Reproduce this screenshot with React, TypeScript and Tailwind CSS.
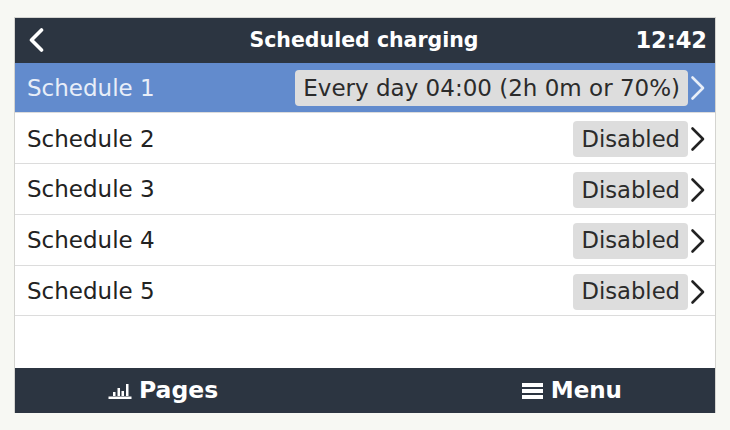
const ROWS = [
  { name: 'Schedule 1', value: 'Every day 04:00 (2h 0m or 70%)', active: true },
  { name: 'Schedule 2', value: 'Disabled' },
  { name: 'Schedule 3', value: 'Disabled' },
  { name: 'Schedule 4', value: 'Disabled' },
  { name: 'Schedule 5', value: 'Disabled' },
]

function Chevron({ left, className }: { left?: boolean; className?: string }) {
  return (
    <svg width="16" height="26" viewBox="0 0 16 26" fill="none" className={className}>
      <path
        d={left ? 'M13.5 3 L3.5 13 L13.5 23' : 'M2.5 2.5 L13 13 L2.5 23.5'}
        stroke="currentColor"
        strokeWidth={left ? 3.6 : 2.6}
        strokeLinecap="round"
        strokeLinejoin="round"
      />
    </svg>
  )
}

function Row({ name, value, active }: { name: string; value: string; active?: boolean }) {
  return (
    <div
      className={`flex h-[50.8px] items-center border-b border-[#dcdcdc] pt-[2px] pl-[12px] pr-[9px] ${
        active ? 'bg-[#628bcd] text-[#e8eef8]' : 'bg-white text-[#222]'
      }`}
    >
      <span className="flex-1 text-[23px] leading-none">{name}</span>
      <span
        className={`mr-[2px] flex h-[36px] items-center rounded-[4px] bg-[#dddddd] px-2 leading-none text-[#2b2b2b] ${
          active ? 'text-[23px]' : 'text-[22.7px]'
        }`}
      >
        {value}
      </span>
      <Chevron />
    </div>
  )
}

export default function App() {
  return (
    <div className="h-[430px] w-[730px] bg-[#f7f8f3] px-[14px] pt-[17px] font-['DejaVu_Sans',sans-serif]">
      <div className="flex h-[396px] w-[702px] flex-col border border-b-0 border-[#d4d4d0] bg-white">
        <header className="grid h-[44.5px] grid-cols-[1fr_auto_1fr] items-center bg-[#2c3541] pl-[13px] pr-[15px] text-white">
          <Chevron left />
          <span className="text-[20.5px] font-bold leading-none">Scheduled charging</span>
          <span className="-mr-[7px] justify-self-end text-[22.5px] font-bold leading-none">12:42</span>
        </header>
        <div className="flex-1">
          {ROWS.map((row) => (
            <Row key={row.name} {...row} />
          ))}
        </div>
        <footer className="flex h-[45px] items-center justify-between bg-[#2c3541] px-[93px] text-white">
          <div className="flex items-center gap-[7px]">
            <svg width="24" height="20" viewBox="0 0 24 20" fill="white">
              <rect x="0.5" y="15.5" width="23" height="2.5" />
              <rect x="5" y="11" width="2.5" height="4" />
              <rect x="9.5" y="7" width="2.5" height="8" />
              <rect x="13.5" y="10" width="2.5" height="5" />
              <rect x="18" y="3" width="2.5" height="12" />
            </svg>
            <span className="text-[23.5px] font-bold leading-none">Pages</span>
          </div>
          <div className="flex items-center gap-[8px]">
            <svg width="21" height="18" viewBox="0 0 21 18" fill="white">
              <rect x="0" y="1" width="21" height="4" />
              <rect x="0" y="7" width="21" height="4" />
              <rect x="0" y="13" width="21" height="4" />
            </svg>
            <span className="text-[23px] font-bold leading-none">Menu</span>
          </div>
        </footer>
      </div>
    </div>
  )
}
